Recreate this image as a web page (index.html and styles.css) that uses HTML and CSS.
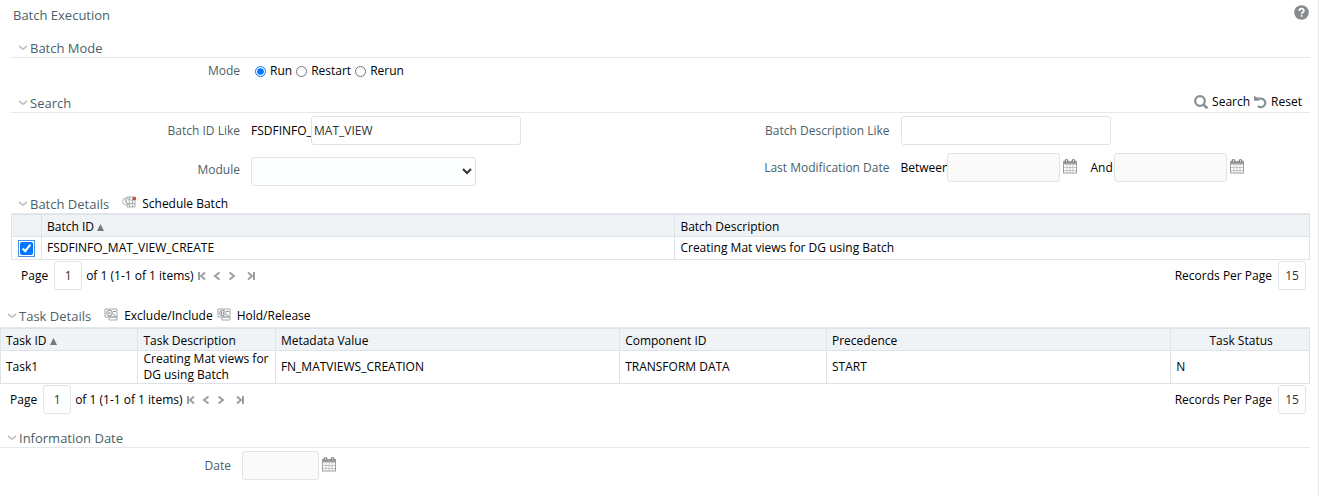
FILE: index.html
```html
<!DOCTYPE html>
<html lang="en">
<head>
<meta charset="utf-8">
<title>Batch Execution</title>
<link rel="stylesheet" href="styles.css">
</head>
<body>
<svg class="defs" aria-hidden="true">
  <symbol id="chevron" viewBox="0 0 10 6"><path d="M1 1l4 3.200L9 1" fill="none" stroke="#c2c4c5" stroke-width="1.800"/></symbol>
  <symbol id="calendar" viewBox="0 0 14 16">
    <path d="M0 3h14v12.500H0z" fill="#9b9d9f"/>
    <path d="M1 6.500h12v8H1z" fill="#fff"/>
    <path d="M4 6v9M7 6v9M10 6v9M1 9.500h12M1 12.500h12" stroke="#c3c5c6" fill="none"/>
    <path d="M1.500 3a2 2 0 0 1 4 0v1.500h-4zM8.500 3a2 2 0 0 1 4 0v1.500h-4z" fill="#85888a"/>
    <path d="M3.500 2v2M10.500 2v2" stroke="#d8d8d8"/>
  </symbol>
  <symbol id="first" viewBox="0 0 8 8"><path d="M1 0v8M7 .5L3 4l4 3.500" fill="none" stroke="#9a9fa2" stroke-width="2"/></symbol>
  <symbol id="prev" viewBox="0 0 8 8"><path d="M6.500 .5L2 4l4.500 3.500" fill="none" stroke="#9a9fa2" stroke-width="2"/></symbol>
  <symbol id="next" viewBox="0 0 8 8"><path d="M1.500 .5L6 4 1.500 7.500" fill="none" stroke="#9a9fa2" stroke-width="2"/></symbol>
  <symbol id="last" viewBox="0 0 8 8"><path d="M7 0v8M1 .5L5 4 1 7.500" fill="none" stroke="#9a9fa2" stroke-width="2"/></symbol>
  <symbol id="sort" viewBox="0 0 8 8"><path d="M4 0l4 8H0z" fill="#777"/></symbol>
</svg>
<main class="page">
  <header class="page-head">
    <h1>Batch Execution</h1>
    <button class="plain help" aria-label="Help"><svg width="15" height="15" viewBox="0 0 15 15"><circle cx="7.500" cy="7.500" r="7.300" fill="#858b8f"/><path d="M5.300 6c0-3.200 4.600-3 4.600-.3C9.900 7.300 7.600 7.200 7.600 9M7.600 10v1.800" fill="none" stroke="#fff" stroke-width="1.700"/></svg></button>
  </header>

  <div class="inset">
    <div class="section-head"><svg class="chev"><use href="#chevron"/></svg><h2>Batch Mode</h2></div>
    <div class="mode-row" role="radiogroup" aria-labelledby="mode">
      <span class="label" id="mode">Mode</span>
      <div class="radios">
        <label><input type="radio" name="mode" checked>Run</label>
        <label><input type="radio" name="mode">Restart</label>
        <label><input type="radio" name="mode">Rerun</label>
      </div>
    </div>

    <div class="section-head"><svg class="chev"><use href="#chevron"/></svg><h2>Search</h2>
      <div class="actions">
        <button class="plain"><svg width="14" height="14" viewBox="0 0 14 14"><circle cx="6" cy="6" r="4.800" fill="none" stroke="#8b9093" stroke-width="2.200"/><path d="M9.300 9.300l4 4" stroke="#8b9093" stroke-width="2.600"/></svg>Search</button>
        <button class="plain"><svg width="13" height="14" viewBox="0 0 13 14"><path d="M2 3.600h5.200a4.300 4.300 0 1 1-3.300 7.300" fill="none" stroke="#8b9093" stroke-width="2.200"/><path d="M0 .5l2.200 1.800 3.300 3.500H0z" fill="#8b9093"/></svg>Reset</button>
      </div>
    </div>
    <div class="search-grid">
      <div class="field">
        <label class="label" for="bid">Batch ID Like</label>
        <div class="control"><span class="prefix">FSDFINFO_</span><input class="box wide" id="bid" type="text" value="MAT_VIEW"></div>
      </div>
      <div class="field">
        <label class="label" for="bdesc">Batch Description Like</label>
        <div class="control"><input class="box wide" id="bdesc" type="text"></div>
      </div>
      <div class="field low">
        <label class="label" for="module">Module</label>
        <div class="control"><select class="box module" id="module"><option></option></select></div>
      </div>
      <div class="field">
        <span class="label">Last Modification Date</span>
        <div class="control">
          <label class="between" for="from">Between</label><input class="box date" id="from" type="text" readonly>
          <button class="plain cal" aria-label="Pick start date"><svg width="14" height="16"><use href="#calendar"/></svg></button>
          <label class="and" for="to">And</label><input class="box date" id="to" type="text" readonly>
          <button class="plain cal" aria-label="Pick end date"><svg width="14" height="16"><use href="#calendar"/></svg></button>
        </div>
      </div>
    </div>

    <div class="section-head tools"><svg class="chev"><use href="#chevron"/></svg><h2>Batch Details</h2>
      <button class="plain tool"><svg width="14" height="13" viewBox="0 0 14 13"><path d="M5 1h8v10H5z" fill="#fff" stroke="#a3a7aa"/><path d="M7.500 1v10M10.500 1v10M5 4h8M5 7.500h8" stroke="#aaa"/><circle cx="4" cy="5.500" r="3.500" fill="#f4f6f8" stroke="#b5b9bc"/><path d="M4 3v3l2.500 3" fill="none" stroke="#8592a0"/><path d="M11 1h3v3h-3z" fill="#e0483c"/></svg>Schedule Batch</button>
    </div>
    <table class="grid">
      <colgroup><col class="c-check"><col class="c-id"><col></colgroup>
      <thead><tr><th></th><th>Batch ID <svg class="sort"><use href="#sort"/></svg></th><th>Batch Description</th></tr></thead>
      <tbody><tr><td class="check"><input type="checkbox" checked aria-label="Select FSDFINFO_MAT_VIEW_CREATE"></td><td>FSDFINFO_MAT_VIEW_CREATE</td><td>Creating Mat views for DG using Batch</td></tr></tbody>
    </table>
    <div class="pager">
      <label for="p1">Page</label><input class="box num" id="p1" type="text" value="1"><span>of 1 (1-1 of 1 items)</span>
      <div class="nav">
        <button class="plain" aria-label="First"><svg><use href="#first"/></svg></button><button class="plain" aria-label="Previous"><svg><use href="#prev"/></svg></button><button class="plain" aria-label="Next"><svg><use href="#next"/></svg></button><button class="plain end" aria-label="Last"><svg><use href="#last"/></svg></button>
      </div>
      <label class="records" for="r1">Records Per Page</label><input class="box num" id="r1" type="text" value="15">
    </div>
  </div>

  <div class="outer">
    <div class="section-head task tools"><svg class="chev"><use href="#chevron"/></svg><h2>Task Details</h2>
      <button class="plain tool"><svg width="14" height="13" viewBox="0 0 14 13"><path d="M1 1h12v8H1zM5 9h8v3H5z" fill="#fff" stroke="#a3a7aa"/><circle cx="5.500" cy="5" r="2.800" fill="#f5f5f5" stroke="#8f9396"/><path d="M4 5h3M9 3.500h3M9 6l3 2.500" stroke="#8f9396"/></svg>Exclude/Include</button>
      <button class="plain tool"><svg width="14" height="13" viewBox="0 0 14 13"><path d="M1 1h12v8H1zM5 9h8v3H5z" fill="#fff" stroke="#a3a7aa"/><circle cx="5.500" cy="5" r="2.800" fill="#f5f5f5" stroke="#8f9396"/><path d="M4.500 3.500v3M6.500 3.500v3M9 3.500h3M9 6l3 2.500" stroke="#8f9396"/></svg>Hold/Release</button>
    </div>
    <table class="grid tasks">
      <colgroup><col class="t1"><col class="t2"><col class="t3"><col class="t4"><col class="t5"><col></colgroup>
      <thead><tr><th>Task ID <svg class="sort"><use href="#sort"/></svg></th><th>Task Description</th><th>Metadata Value</th><th>Component ID</th><th>Precedence</th><th class="center">Task Status</th></tr></thead>
      <tbody><tr><td>Task1</td><td>Creating Mat views for DG using Batch</td><td>FN_MATVIEWS_CREATION</td><td>TRANSFORM DATA</td><td>START</td><td>N</td></tr></tbody>
    </table>
    <div class="pager">
      <label for="p2">Page</label><input class="box num" id="p2" type="text" value="1"><span>of 1 (1-1 of 1 items)</span>
      <div class="nav">
        <button class="plain" aria-label="First"><svg><use href="#first"/></svg></button><button class="plain" aria-label="Previous"><svg><use href="#prev"/></svg></button><button class="plain" aria-label="Next"><svg><use href="#next"/></svg></button><button class="plain end" aria-label="Last"><svg><use href="#last"/></svg></button>
      </div>
      <label class="records" for="r2">Records Per Page</label><input class="box num" id="r2" type="text" value="15">
    </div>
    <div class="section-head info"><svg class="chev"><use href="#chevron"/></svg><h2>Information Date</h2></div>
    <div class="date-row">
      <label class="label" for="idate">Date</label><input class="box info-date" id="idate" type="text" readonly>
      <button class="plain cal" aria-label="Pick date"><svg width="14" height="16"><use href="#calendar"/></svg></button>
    </div>
  </div>
</main>
</body>
</html>
```
FILE: styles.css
```css
* { box-sizing: border-box; }
body { margin: 0; background: #fff; color: #000; font: 12px/16px "Open Sans", "Noto Sans", sans-serif; }
input, select, button { font: inherit; color: inherit; }
h1, h2 { margin: 0; font-size: 13px; line-height: 18px; font-weight: 400; color: #4a5f69; }
svg { flex: none; }
.defs { position: absolute; width: 0; height: 0; }
.page { min-height: 100vh; padding-right: 8px; border-right: 1px solid #e3e5e7; }
.page-head { display: flex; justify-content: space-between; align-items: center; height: 30px; padding: 0 1px 0 13px; }
.plain { display: inline-flex; align-items: center; gap: 4px; padding: 0; border: 0; background: none; cursor: pointer; }
.help { padding-bottom: 5px; }
.inset { padding-left: 11px; }

.section-head { display: flex; align-items: center; height: 28px; padding: 9px 8px 0 7px; border-bottom: 1px solid #e4e8eb; }
.section-head h2 { margin-left: 2px; }
.chev { width: 10px; height: 6px; }
.actions { display: flex; gap: 4px; margin-left: auto; padding-bottom: 2px; }
.label { text-align: right; color: #4a5f69; }

.mode-row { display: flex; align-items: center; height: 27px; padding-bottom: 1px; }
.mode-row .label { width: 229px; }
.radios { display: flex; gap: 4px; margin-left: 15px; }
.radios label { display: flex; align-items: center; gap: 4px; }
.radios input { width: 11px; height: 11px; margin: 0; }

.search-grid { display: grid; grid-template-columns: 1fr 1fr; align-items: start; row-gap: 8px; padding-top: 3px; }
.field { display: flex; align-items: center; }
.field .label { width: 229px; margin-right: 11px; }
.field.low .control { padding-top: 4px; }
.control { display: flex; align-items: center; }
.prefix { width: 60px; }
.box { height: 29px; padding: 2px; border: 1px solid #dfe4e9; border-radius: 3px; background: #fff; color: #333; }
.wide { width: 210px; }
.module { width: 225px; background: #fcfdfe; }
.date { width: 113px; background: #fafafa; }
.between { width: 46px; }
.cal { margin-left: 3px; padding-bottom: 4px; }
.and { margin-left: 14px; width: 23px; }

.tool { margin-left: 13px; gap: 6px; }
.tool svg { margin-bottom: 3px; }
.tool + .tool { margin-left: 4px; }

.grid { width: 100%; border-collapse: collapse; table-layout: fixed; }
.grid th, .grid td { height: 22px; padding: 0 3px 0 5px; border: 1px solid #dde3e8; text-align: left; font-weight: 400; }
.grid th { padding-top: 2px; background: #eff3f6; }
.grid td { height: 23px; }
.grid .center { text-align: center; }
.grid .check { padding: 0; text-align: center; }
.check input { display: block; width: 13px; height: 13px; margin: 0 auto; outline: 1px solid #4a90e2; outline-offset: 1px; }
.c-check { width: 30px; }
.c-id { width: 48.8%; }
.sort { width: 7px; height: 7px; }
.grid.tasks td { height: 33px; }
.t1, .t2 { width: 10.5%; }
.t3, .t5 { width: 26.3%; }
.t4 { width: 15.8%; }

.pager { display: flex; align-items: center; padding: 1px 4px 0 10px; }
.num { width: 28px; text-align: center; margin: 0 4px 0 6px; }
.pager .records { margin-left: auto; }
.records + .num { margin-right: 0; }
.nav { display: flex; gap: 7px; margin-left: 4px; }
.nav svg { width: 8px; height: 8px; }
.nav .end { margin-left: 4px; }

.task { height: 38px; padding-top: 14px; }
.info { height: 34px; padding-top: 14px; }
.date-row { display: flex; align-items: center; padding-top: 3px; }
.date-row .label { width: 231px; margin-right: 11px; }
.info-date { width: 77px; background: #fafafa; }
```
